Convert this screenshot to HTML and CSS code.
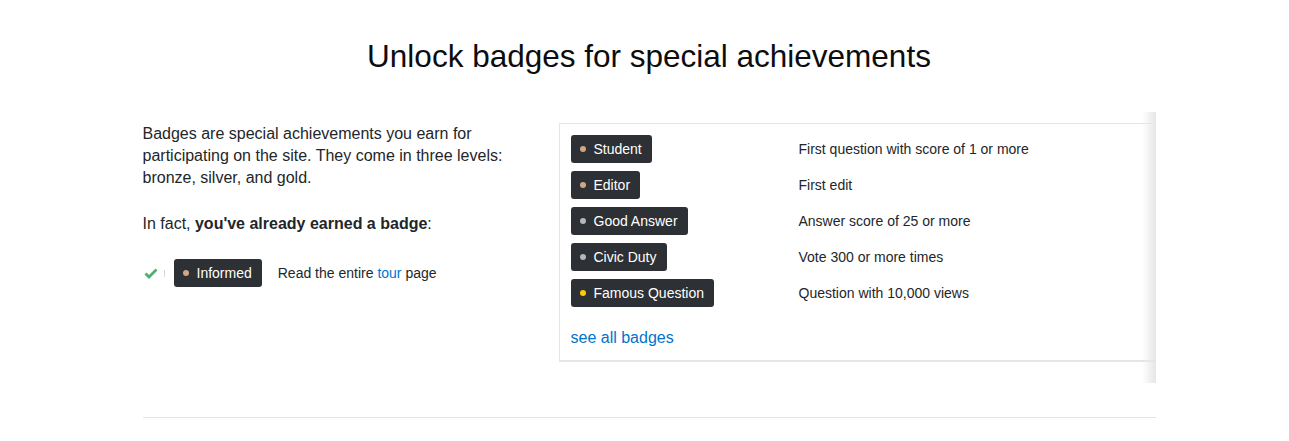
FILE: index.html
```html
<!DOCTYPE html>
<html>
<head>
<meta charset="utf-8">
<link rel="stylesheet" href="styles.css">
</head>
<body>
<div class="page">
  <h1 class="title">Unlock badges for special achievements</h1>
  <div class="row">
    <div class="intro">
      <p class="lead">Badges are special achievements you earn for participating on the site. They come in three levels: bronze, silver, and gold.</p>
      <p class="lead">In fact, <b>you've already earned a badge</b>:</p>
      <div class="earned">
        <svg class="check" width="14" height="12" viewBox="0 0 14 12"><path d="M1.5 6.5 L5 10 L12.5 2.5" fill="none" stroke="#4fae6e" stroke-width="2.8"/></svg>
        <span class="tick"></span>
        <span class="badge"><span class="dot bronze"></span>Informed</span>
        <span class="desc">Read the entire <a class="link" href="#">tour</a> page</span>
      </div>
    </div>
    <div class="cardwrap">
      <div class="card">
        <div class="grid">
          <div><span class="badge"><span class="dot bronze"></span>Student</span></div>
          <div class="gdesc">First question with score of 1 or more</div>
          <div><span class="badge"><span class="dot bronze"></span>Editor</span></div>
          <div class="gdesc">First edit</div>
          <div><span class="badge"><span class="dot silver"></span>Good Answer</span></div>
          <div class="gdesc">Answer score of 25 or more</div>
          <div><span class="badge"><span class="dot silver"></span>Civic Duty</span></div>
          <div class="gdesc">Vote 300 or more times</div>
          <div><span class="badge"><span class="dot gold"></span>Famous Question</span></div>
          <div class="gdesc">Question with 10,000 views</div>
        </div>
        <a class="all" href="#">see all badges</a>
      </div>
      <div class="fade"></div>
    </div>
  </div>
  <hr class="rule">
</div>
</body>
</html>
```
FILE: styles.css
```css
html, body { margin: 0; padding: 0; background: #fff; }
body { font-family: "Liberation Sans", Arial, sans-serif; color: #232629; }
.page { width: 1013px; margin-left: calc(50% - 502px); padding-top: 36px; }
.title { margin: 0; font-weight: 400; font-size: 31.5px; line-height: 40px; text-align: center; color: #0c0d0e; }
.row { display: flex; margin-top: 36px; }
.intro { width: 416px; padding-top: 11px; }
.lead { margin: 0 0 24px; font-size: 16px; line-height: 22px; color: #232629; }
.lead b { font-weight: 700; }
.earned { display: flex; align-items: center; }
.check { display: block; margin-left: 1px; }
.tick { width: 1px; height: 7px; background: #d6d9dc; margin-left: 6px; }
.earned .badge { margin-left: 9px; }
.desc { margin-left: 16px; font-size: 14px; color: #232629; }
.link { color: #0074cc; text-decoration: none; }
.badge { display: inline-flex; align-items: center; height: 28px; padding: 0 10px 0 9px; background: #2d3034; color: #fff; border-radius: 3px; font-size: 14px; box-sizing: border-box; }
.dot { width: 6px; height: 6px; border-radius: 50%; margin-right: 8px; }
.bronze { background: #d1a684; }
.silver { background: #b4b8bc; }
.gold { background: #ffcc01; }
.cardwrap { position: relative; flex: 1; overflow: hidden; padding: 11px 0 21px; }
.card { width: 640px; border: 1px solid #e3e6e8; border-bottom-width: 2px; padding: 11px 11px 11px; background: #fff; }
.grid { display: grid; grid-template-columns: 228px 1fr; row-gap: 8px; align-items: center; }
.gdesc { font-size: 14px; color: #232629; }
.all { display: inline-block; margin-top: 20px; font-size: 16px; line-height: 22px; color: #0074cc; text-decoration: none; }
.fade { position: absolute; top: 0; right: 0; bottom: 0; width: 14px; background: linear-gradient(to right, rgba(255,255,255,0), #e6e6e6); }
.rule { margin: 34px 0 0; border: 0; border-top: 1px solid #e3e6e8; }
```
